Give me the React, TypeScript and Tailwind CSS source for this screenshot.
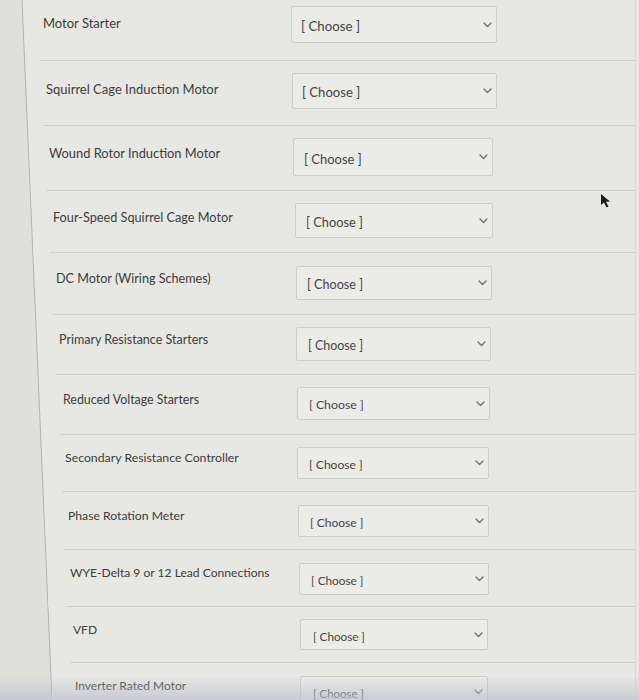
import React from "react";

type Row = {
  label: string;
  h: string;
  hn: number;
  t: number;
  b: number;
  bx: string;
  dl: string;
  lw: string;
  lt: string;
  fs: string;
  st: string;
  sh: string;
  sw: string;
  cf: string;
  cp: string;
  last?: boolean;
};

const rows: Row[] = [
  { label: "Motor Starter", h: "h-[61px]", hn: 61, t: 22, b: 24.6, bx: "w-[25px]", dl: "pl-[15px]", lw: "w-[251px]", lt: "pt-[15px]", fs: "text-[13px]", st: "mt-[6px]", sh: "h-[37px]", sw: "w-[206px]", cf: "text-[13.3px]", cp: "pl-[9px]" },
  { label: "Squirrel Cage Induction Motor", h: "h-[65px]", hn: 65, t: 24.6, b: 27.4, bx: "w-[28px]", dl: "pl-[15px]", lw: "w-[249px]", lt: "pt-[20px]", fs: "text-[13px]", st: "mt-[12px]", sh: "h-[36px]", sw: "w-[205px]", cf: "text-[13.1px]", cp: "pl-[9px]" },
  { label: "Wound Rotor Induction Motor", h: "h-[65px]", hn: 65, t: 27.4, b: 30.2, bx: "w-[31px]", dl: "pl-[15px]", lw: "w-[247px]", lt: "pt-[19px]", fs: "text-[12.85px]", st: "mt-[12px]", sh: "h-[38px]", sw: "w-[200px]", cf: "text-[13px]", cp: "pl-[10px]" },
  { label: "Four-Speed Squirrel Cage Motor", h: "h-[62px]", hn: 62, t: 30.2, b: 32.8, bx: "w-[33px]", dl: "pl-[17px]", lw: "w-[245px]", lt: "pt-[18px]", fs: "text-[12.7px]", st: "mt-[12px]", sh: "h-[35px]", sw: "w-[198px]", cf: "text-[12.8px]", cp: "pl-[10px]" },
  { label: "DC Motor (Wiring Schemes)", h: "h-[62px]", hn: 62, t: 32.8, b: 35.5, bx: "w-[36px]", dl: "pl-[17px]", lw: "w-[243px]", lt: "pt-[18px]", fs: "text-[12.6px]", st: "mt-[13px]", sh: "h-[34px]", sw: "w-[196px]", cf: "text-[12.6px]", cp: "pl-[10px]" },
  { label: "Primary Resistance Starters", h: "h-[60px]", hn: 60, t: 35.5, b: 38.1, bx: "w-[39px]", dl: "pl-[17px]", lw: "w-[240px]", lt: "pt-[17px]", fs: "text-[12.5px]", st: "mt-[12px]", sh: "h-[34px]", sw: "w-[195px]", cf: "text-[12.4px]", cp: "pl-[11px]" },
  { label: "Reduced Voltage Starters", h: "h-[60px]", hn: 60, t: 38.1, b: 40.6, bx: "w-[41px]", dl: "pl-[19px]", lw: "w-[237px]", lt: "pt-[17px]", fs: "text-[12.4px]", st: "mt-[12px]", sh: "h-[33px]", sw: "w-[193px]", cf: "text-[12.3px]", cp: "pl-[11px]" },
  { label: "Secondary Resistance Controller", h: "h-[57px]", hn: 57, t: 40.6, b: 43.1, bx: "w-[44px]", dl: "pl-[18px]", lw: "w-[235px]", lt: "pt-[15px]", fs: "text-[12.3px]", st: "mt-[12px]", sh: "h-[32px]", sw: "w-[192px]", cf: "text-[12.1px]", cp: "pl-[11px]" },
  { label: "Phase Rotation Meter", h: "h-[58px]", hn: 58, t: 43.1, b: 45.6, bx: "w-[46px]", dl: "pl-[19px]", lw: "w-[233px]", lt: "pt-[16px]", fs: "text-[12.2px]", st: "mt-[13px]", sh: "h-[32px]", sw: "w-[191px]", cf: "text-[12px]", cp: "pl-[11px]" },
  { label: "WYE-Delta 9 or 12 Lead Connections", h: "h-[57px]", hn: 57, t: 45.6, b: 48.0, bx: "w-[48px]", dl: "pl-[19px]", lw: "w-[232px]", lt: "pt-[15px]", fs: "text-[12.1px]", st: "mt-[13px]", sh: "h-[32px]", sw: "w-[190px]", cf: "text-[11.8px]", cp: "pl-[11px]" },
  { label: "VFD", h: "h-[56px]", hn: 56, t: 48.0, b: 50.4, bx: "w-[51px]", dl: "pl-[19px]", lw: "w-[230px]", lt: "pt-[15px]", fs: "text-[12px]", st: "mt-[12px]", sh: "h-[31px]", sw: "w-[188px]", cf: "text-[11.7px]", cp: "pl-[12px]" },
  { label: "Inverter Rated Motor", h: "h-[37px]", hn: 37, t: 50.4, b: 52, bx: "w-[52px]", dl: "pl-[20px]", lw: "w-[228px]", lt: "pt-[15px]", fs: "text-[12px]", st: "mt-[13px]", sh: "h-[31px]", sw: "w-[188px]", cf: "text-[11.5px]", cp: "pl-[12px]", last: true },
];

function Chevron() {
  return (
    <svg width="9" height="6" viewBox="0 0 9 6" className="shrink-0">
      <path d="M1 1 L4.5 4.6 L8 1" fill="none" stroke="#767674" strokeWidth="1.4" strokeLinecap="round" strokeLinejoin="round" />
    </svg>
  );
}

function Edge({ r }: { r: Row }) {
  const w = Math.ceil(r.b);
  return (
    <svg
      className={`${r.bx} h-full shrink-0 block`}
      viewBox={`0 0 ${w} ${r.hn}`}
      preserveAspectRatio="none"
    >
      <polygon points={`0,0 ${r.t},0 ${r.b},${r.hn} 0,${r.hn}`} fill="#dfdfdb" />
      <line x1={r.t} y1={0} x2={r.b} y2={r.hn} stroke="#b3b3af" strokeWidth="1" />
    </svg>
  );
}

function Select({ r }: { r: Row }) {
  return (
    <div
      className={`${r.st} ${r.sh} ${r.sw} ${r.cp} shrink-0 flex items-center justify-between pr-[4px] bg-[#ebebe7] border border-[#cdcdc9] rounded-[2px]`}
    >
      <span className={`pt-[4px] ${r.cf} leading-none text-[#454543]`}>[ Choose ]</span>
      <Chevron />
    </div>
  );
}

export default function App() {
  return (
    <div
      className="relative w-[639px] h-[700px] overflow-hidden bg-[#e7e7e3] flex flex-col"
      style={{ fontFamily: "Lato, 'Open Sans', sans-serif" }}
    >
      {rows.map((r, i) => (
        <div key={i} className={`flex shrink-0 ${r.h}`}>
          <Edge r={r} />
          <div className={`flex-1 ${r.dl}`}>
            <div
              className={`flex h-full mr-[3px] border-r border-[#d6d6d2] ${r.last ? "" : "border-b border-b-[#cfcfcb]"}`}
            >
              <div className={`${r.lw} ${r.lt} pl-[3px] shrink-0 ${r.fs} leading-[16px] text-[#3d3d3b]`}>
                {r.label}
              </div>
              <Select r={r} />
            </div>
          </div>
        </div>
      ))}

      {/* mouse cursor */}
      <svg className="absolute left-[600px] top-[193px]" width="12" height="16" viewBox="0 0 12 16">
        <path d="M1 1 L1 12 L4 9.5 L6.5 14.5 L8.5 13.5 L6 8.8 L10 8.5 Z" fill="#1e1e1e" />
      </svg>

      {/* bottom shading from the photo */}
      <div className="absolute left-0 right-0 bottom-0 h-[24px] pointer-events-none bg-gradient-to-b from-transparent to-[#b9bfcc]/70" />
    </div>
  );
}
